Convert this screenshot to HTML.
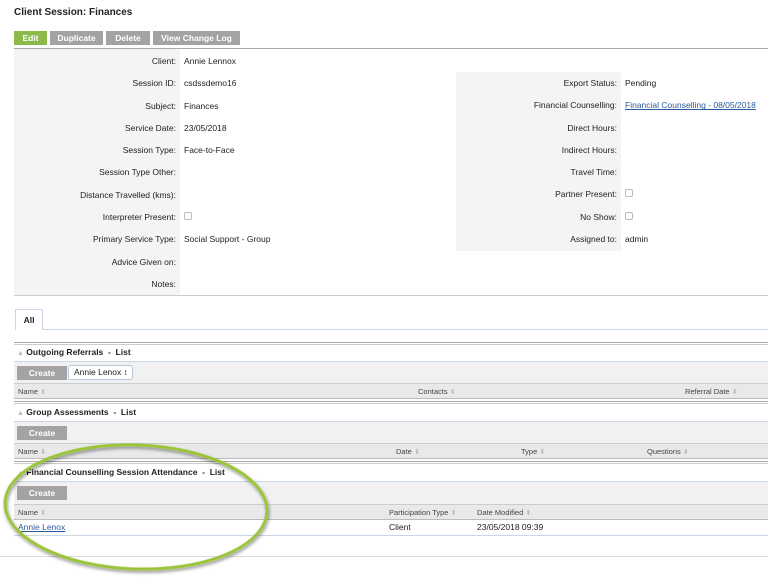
<!DOCTYPE html>
<html><head><style>
*{margin:0;padding:0;box-sizing:border-box}
body{width:768px;height:582px;background:#fff;font-family:"Liberation Sans",Arial,sans-serif;font-size:8.5px;color:#222;position:relative;overflow:hidden}
.a{position:absolute;white-space:nowrap}
.btn{position:absolute;top:31px;height:14px;color:#fff;font-weight:bold;font-size:8.5px;line-height:14px;text-align:center;background:#a3a3a3}
.lk{color:#2a5b9c;text-decoration:underline}
.cb{display:inline-block;width:8px;height:8px;border:1px solid #bbb;border-radius:2px;background:#fff}
.sec{position:absolute;left:14px;right:0;height:3px;border-top:1px solid #aaa;border-bottom:1px solid #ccc}
.box{position:absolute;left:14px;right:0;background:#f1f1f1;border-top:1px solid #c8d6e5}
.hr{position:absolute;left:14px;right:0;height:16px;background:#e9e9e9;border-top:1px solid #ccc;border-bottom:1px solid #bbb;color:#444;font-size:7.5px;line-height:15px}
.cr{position:absolute;left:17px;width:50px;height:14px;background:#a3a3a3;color:#fff;font-weight:bold;font-size:8.5px;line-height:14px;text-align:center}
.s{color:#bbb;font-size:7px}
.h{position:absolute;left:17px;font-weight:bold;font-size:8.5px}
</style></head><body>
<div class="a" style="left:14px;top:7px;font-weight:bold;font-size:10px">Client Session: Finances</div>
<div class="btn" style="left:14px;width:33px;background:#8cb94a">Edit</div>
<div class="btn" style="left:50px;width:53px">Duplicate</div>
<div class="btn" style="left:106px;width:44px">Delete</div>
<div class="btn" style="left:153px;width:87px">View Change Log</div>
<div class="a" style="left:14px;top:48px;width:754px;height:1px;background:#aaa"></div>
<div class="a" style="left:14px;top:49px;width:166px;height:246px;background:#f4f4f4"></div>
<div class="a" style="left:456px;top:72px;width:165px;height:179px;background:#f4f4f4"></div>
<div class="a" style="left:14px;top:295px;width:754px;height:1px;background:#ccc"></div>
<div style="position:absolute;left:0;top:50px;width:180px;line-height:22.3px">
<div style="text-align:right;padding-right:4px">Client:<br>Session ID:<br>Subject:<br>Service Date:<br>Session Type:<br>Session Type Other:<br>Distance Travelled (kms):<br>Interpreter Present:<br>Primary Service Type:<br>Advice Given on:<br>Notes:</div></div>
<div style="position:absolute;left:184px;top:50px;line-height:22.3px;white-space:nowrap">Annie Lennox<br>csdssdemo16<br>Finances<br>23/05/2018<br>Face-to-Face<br>&nbsp;<br>&nbsp;<br><span class="cb"></span><br>Social Support - Group</div>
<div style="position:absolute;left:456px;top:72px;width:165px;line-height:22.3px"><div style="text-align:right;padding-right:4px">Export Status:<br>Financial Counselling:<br>Direct Hours:<br>Indirect Hours:<br>Travel Time:<br>Partner Present:<br>No Show:<br>Assigned to:</div></div>
<div style="position:absolute;left:625px;top:72px;line-height:22.3px;white-space:nowrap">Pending<br><span class="lk">Financial Counselling - 08/05/2018</span><br>&nbsp;<br>&nbsp;<br>&nbsp;<br><span class="cb"></span><br><span class="cb"></span><br>admin</div>
<div class="a" style="left:15px;top:309px;width:28px;height:21px;border:1px solid #c8d6e5;border-bottom:none;background:#fff;font-weight:bold;text-align:center;line-height:20px">All</div>
<div class="a" style="left:43px;top:329px;width:725px;height:1px;background:#c8d6e5"></div>
<div class="sec" style="top:342px"></div>
<div class="h" style="top:347px"><span class="s">&#x25B2;</span> Outgoing Referrals &nbsp;- &nbsp;List</div>
<div class="box" style="top:361px;height:22px"></div>
<div class="cr" style="top:366px">Create</div>
<div class="a" style="left:68px;top:365px;width:65px;height:15px;background:#fff;border:1px solid #b8c8da;border-radius:3px;font-size:8.5px;line-height:13px;padding-left:5px">Annie Lenox &#x2195;</div>
<div class="hr" style="top:383px"><span style="position:absolute;left:4px">Name <span class="s">&#x2B0D;</span></span><span style="position:absolute;left:404px">Contacts <span class="s">&#x2B0D;</span></span><span style="position:absolute;left:671px">Referral Date <span class="s">&#x2B0D;</span></span></div>
<div class="sec" style="top:401px"></div>
<div class="h" style="top:407px"><span class="s">&#x25B2;</span> Group Assessments &nbsp;- &nbsp;List</div>
<div class="box" style="top:421px;height:22px"></div>
<div class="cr" style="top:426px">Create</div>
<div class="hr" style="top:443px"><span style="position:absolute;left:4px">Name <span class="s">&#x2B0D;</span></span><span style="position:absolute;left:382px">Date <span class="s">&#x2B0D;</span></span><span style="position:absolute;left:507px">Type <span class="s">&#x2B0D;</span></span><span style="position:absolute;left:633px">Questions <span class="s">&#x2B0D;</span></span></div>
<div class="sec" style="top:461px"></div>
<div class="h" style="top:467px"><span class="s">&#x25B2;</span> Financial Counselling Session Attendance &nbsp;- &nbsp;List</div>
<div class="box" style="top:481px;height:23px"></div>
<div class="cr" style="top:486px">Create</div>
<div class="hr" style="top:504px"><span style="position:absolute;left:4px">Name <span class="s">&#x2B0D;</span></span><span style="position:absolute;left:375px">Participation Type <span class="s">&#x2B0D;</span></span><span style="position:absolute;left:463px">Date Modified <span class="s">&#x2B0D;</span></span></div>
<div class="a" style="left:14px;top:520px;width:754px;height:16px;border-bottom:1px solid #c8d6e5;line-height:14px">
<span class="lk" style="position:absolute;left:4px">Annie Lenox</span><span style="position:absolute;left:375px">Client</span><span style="position:absolute;left:463px">23/05/2018 09:39</span></div>
<div class="a" style="left:0;top:556px;width:768px;height:1px;background:#ddd"></div>
<svg class="a" style="left:0;top:0" width="768" height="582">
<defs><filter id="f"><feDropShadow dx="1" dy="2" stdDeviation="1.5" flood-color="#000" flood-opacity="0.45"/></filter></defs>
<ellipse cx="136" cy="507" rx="131" ry="62" transform="rotate(2 136 507)" fill="none" stroke="#9cc43a" stroke-width="3" filter="url(#f)"/>
</svg>
</body></html>
